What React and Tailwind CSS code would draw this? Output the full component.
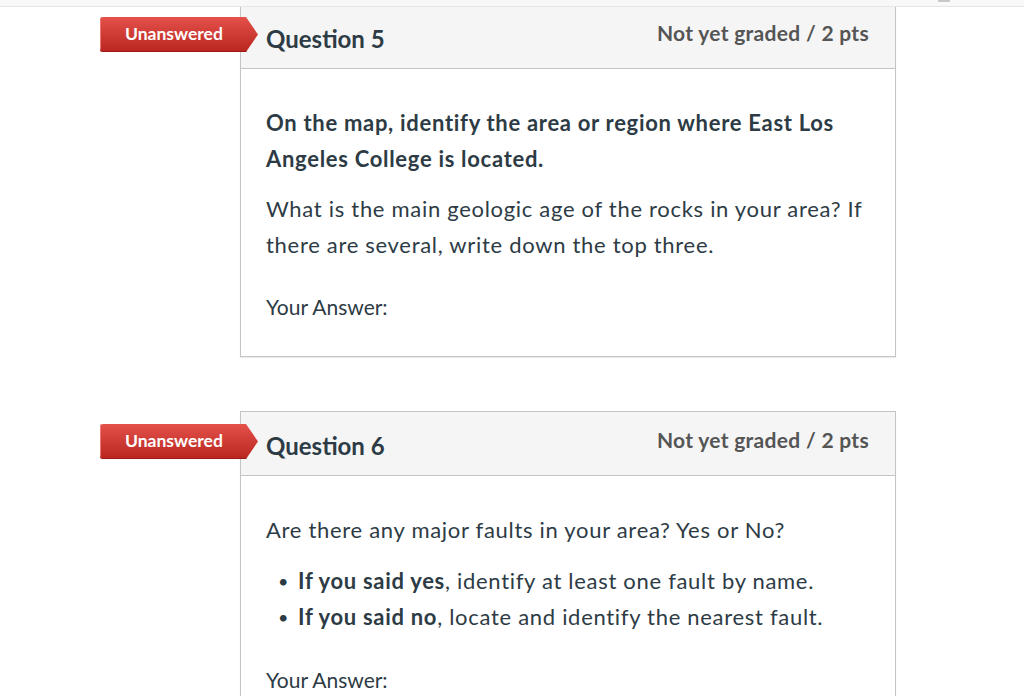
import React from 'react';

const Badge = () => (
  <div className="absolute left-[-141px] top-[12px] h-[35px] w-[158px] rounded-l-[3px] bg-gradient-to-b from-[#e4504a] to-[#b9241f] shadow-[inset_0_-1px_0_#9c1c18,inset_1px_0_0_#ee7670] [clip-path:polygon(0_0,146px_0,158px_50%,146px_100%,0_100%)] flex items-center pl-[25px] pb-[1px]">
    <span className="text-white font-bold text-[17.5px] leading-none">Unanswered</span>
  </div>
);

const QuestionCard = ({ number, children }) => (
  <div className="relative w-[656px] border border-[#c4c4c4] bg-white shadow-[0_1px_1px_rgba(0,0,0,0.08)]">
    <Badge />
    <div className="h-[64px] bg-[#f5f5f5] border-b border-[#c4c4c4] flex items-center justify-between pl-[25px] pr-[26px]">
      <h2 className="pt-[4px] text-[24px] font-bold text-[#2d3b45]">Question {number}</h2>
      <div className="pb-[8px] text-[21px] tracking-[0.3px] font-bold text-[#555]">Not yet graded / 2 pts</div>
    </div>
    {children}
  </div>
);

const Bullet = ({ children }) => (
  <li className="flex">
    <span className="w-[20px] shrink-0 text-[18px]">•</span>
    <span>{children}</span>
  </li>
);

export default function App() {
  return (
    <div className="relative min-h-[696px] bg-white font-['Lato','Liberation_Sans',sans-serif] text-[#2d3b45]">
      <div className="fixed top-0 left-0 right-0 z-10 h-[7px] bg-[#f8f8f8] border-b border-[#e6e6e6]">
        <div className="absolute left-[938px] top-0 h-[2px] w-[12px] bg-[#c8c8c8]" />
      </div>

      <div className="ml-[240px] pt-[4px] flex flex-col gap-[54px]">
        <QuestionCard number={5}>
          <div className="pl-[25px] pr-[26px] pt-[36px] pb-[35px]">
            <p className="text-[22px] tracking-[0.7px] leading-[36px] font-bold">
              On the map, identify the area or region where East Los Angeles College is located.
            </p>
            <p className="mt-[14px] text-[22px] tracking-[0.7px] leading-[36px]">
              What is the main geologic age of the rocks in your area? If there are several, write down the top three.
            </p>
            <div className="mt-[30px] text-[21px] leading-[28px]">Your Answer:</div>
          </div>
        </QuestionCard>

        <QuestionCard number={6}>
          <div className="pl-[25px] pr-[26px] pt-[36px] pb-[40px]">
            <p className="text-[22px] tracking-[0.7px] leading-[36px]">Are there any major faults in your area? Yes or No?</p>
            <ul className="mt-[15px] pl-[12px] text-[22px] tracking-[0.7px] leading-[36px]">
              <Bullet>
                <span className="font-bold">If you said yes</span>, identify at least one fault by name.
              </Bullet>
              <Bullet>
                <span className="font-bold">If you said no</span>, locate and identify the nearest fault.
              </Bullet>
            </ul>
            <div className="mt-[31px] text-[21px] leading-[28px]">Your Answer:</div>
          </div>
        </QuestionCard>
      </div>
    </div>
  );
}
